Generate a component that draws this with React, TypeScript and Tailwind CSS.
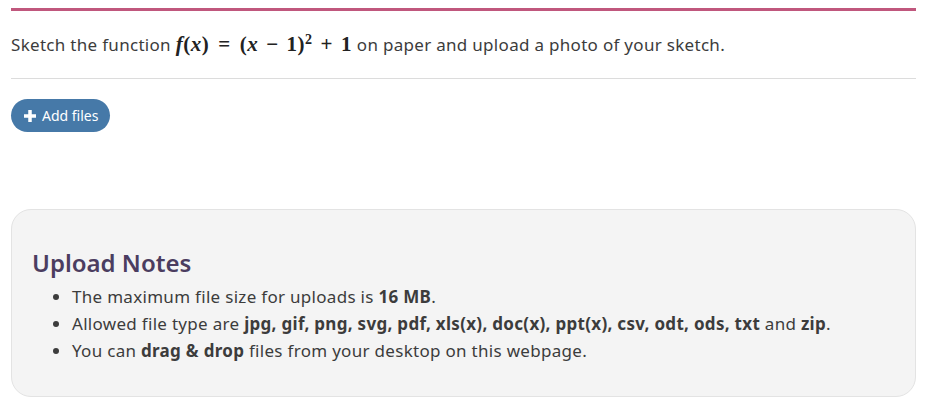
import React from "react";

export default function App() {
  const font = { fontFamily: "'Noto Sans', 'Open Sans', sans-serif" };
  const serif = { fontFamily: "'Liberation Serif', 'DejaVu Serif', serif" };
  return (
    <div className="w-[932px] h-[402px] bg-white overflow-hidden text-[#3c3c3c]" style={font}>
      <div className="ml-[11px] mr-[16px] mt-[8px]">
        <div className="h-[3px] bg-[#c0577d]" />
        <p className="mt-[20px] text-[17px] tracking-[0.3px] leading-[26px] pb-[20px] border-b border-[#dcdcdc]">
          Sketch the function{" "}
          <span className="text-[21px] font-bold tracking-[0.5px] text-[#222]" style={serif}>
            <i>f</i>(<i>x</i>)<span className="mx-[9px]">=</span>(<i>x</i>
            <span className="mx-[8px]">−</span>1)<sup className="text-[14px]">2</sup>
            <span className="mx-[8px]">+</span>1
          </span>{" "}
          on paper and upload a photo of your sketch.
        </p>
        <button className="mt-[20px] h-[33px] w-[99px] pl-[13px] rounded-full bg-[#4679a8] text-white text-[14px] flex items-center gap-[6px]">
          <svg width="12" height="12" viewBox="0 0 12 12">
            <rect x="4.25" y="0" width="3.5" height="12" fill="white" />
            <rect x="0" y="4.25" width="12" height="3.5" fill="white" />
          </svg>
          Add files
        </button>
        <div className="mt-[77px] h-[188px] rounded-[20px] bg-[#f4f4f4] border border-[#e3e3e3] px-[20px] pt-[37px]">
          <h2 className="text-[24px] font-semibold text-[#4b3d60] leading-[32px]">Upload Notes</h2>
          <ul className="mt-[4px] pl-[40px] list-disc text-[17px] tracking-[0.3px] leading-[27px]">
            <li>The maximum file size for uploads is <b>16 MB</b>.</li>
            <li>
              Allowed file type are <b>jpg, gif, png, svg, pdf, xls(x), doc(x), ppt(x), csv, odt, ods, txt</b> and <b>zip</b>.
            </li>
            <li>You can <b>drag &amp; drop</b> files from your desktop on this webpage.</li>
          </ul>
        </div>
      </div>
    </div>
  );
}
